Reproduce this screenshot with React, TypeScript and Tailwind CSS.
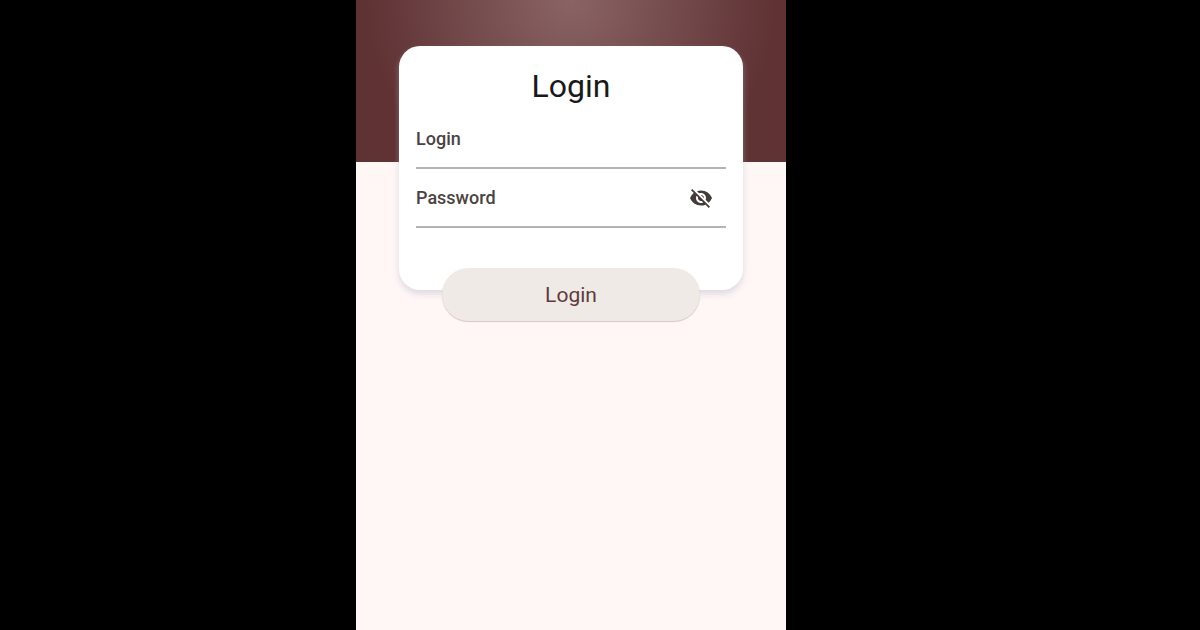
import React, { useState } from 'react';
import { MdVisibility, MdVisibilityOff } from 'react-icons/md';

interface FieldProps {
  id: string;
  label: string;
  type: string;
  value: string;
  onChange: (value: string) => void;
  children?: React.ReactNode;
}

const Field: React.FC<FieldProps> = ({ id, label, type, value, onChange, children }) => (
  <div className="flex h-[59px] items-center border-b-2 border-[#b5b3b3]">
    <label htmlFor={id} className="text-lg font-medium text-[#4a4343]">
      {label}
    </label>
    <input
      id={id}
      type={type}
      value={value}
      onChange={(e) => onChange(e.target.value)}
      className="ml-3 h-10 min-w-0 flex-1 bg-transparent text-base text-[#1d1b1b] outline-none"
    />
    {children}
  </div>
);

const App: React.FC = () => {
  const [login, setLogin] = useState('');
  const [password, setPassword] = useState('');
  const [visible, setVisible] = useState(false);

  return (
    <div className="min-h-screen bg-black font-[Roboto,sans-serif] sm:pl-[356px]">
      <main className="min-h-screen max-w-[430px] bg-[#fff7f6]">
        <div className="h-[162px] bg-[#5f3234] bg-[radial-gradient(circle_at_top,#8a6465_0px,#5f3234_205px)]" />

        <form
          onSubmit={(e) => e.preventDefault()}
          className="mx-[43px] -mt-29 rounded-[21px] bg-white px-[17px] pt-5 shadow-[0_4px_6px_0px_rgba(185,185,205,0.45)]"
        >
          <h1 className="mb-1 text-center text-[32px] leading-10 text-[#1a1919]">Login</h1>

          <Field id="login" label="Login" type="text" value={login} onChange={setLogin} />
          <Field
            id="password"
            label="Password"
            type={visible ? 'text' : 'password'}
            value={password}
            onChange={setPassword}
          >
            <button
              type="button"
              aria-label={visible ? 'Hide password' : 'Show password'}
              onClick={() => setVisible(!visible)}
              className="mr-[13px] text-[#443b3b]"
            >
              {visible ? <MdVisibility size={24} /> : <MdVisibilityOff size={24} />}
            </button>
          </Field>

          {/* the button hangs over the bottom edge of the card */}
          <div className="mt-10 flex h-[22px] items-start px-[26px]">
            <button
              type="submit"
              className="h-[53px] w-full shrink-0 rounded-full bg-[#efeae6] pt-[3px] text-[21px] text-[#5f3a3e] shadow-[0_1px_1px_rgba(95,50,52,0.25)]"
            >
              Login
            </button>
          </div>
        </form>
      </main>
    </div>
  );
};

export default App;
